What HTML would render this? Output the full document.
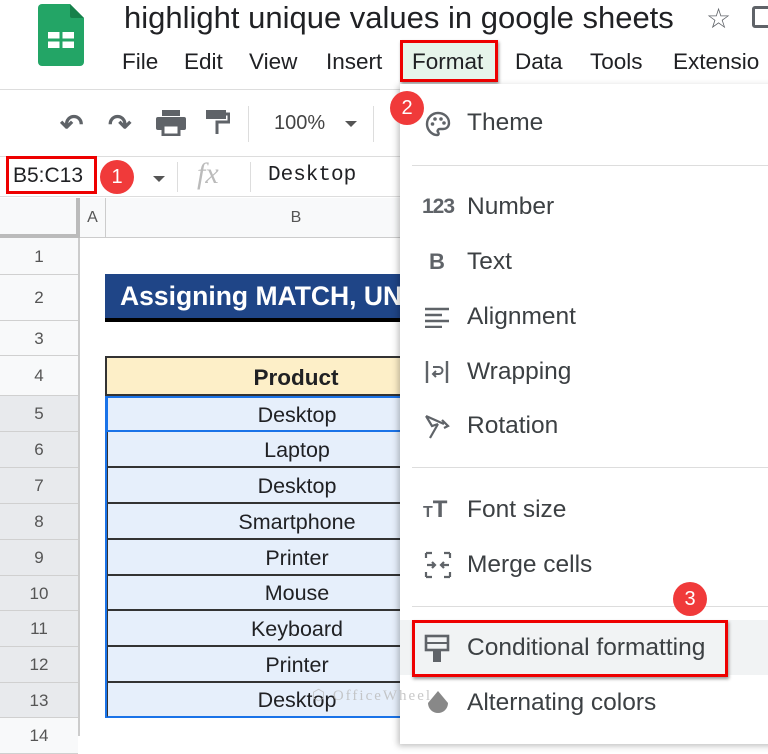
<!DOCTYPE html>
<html><head><style>
*{margin:0;padding:0;box-sizing:border-box}
body{width:768px;height:736px;overflow:hidden;background:#fff;font-family:"Liberation Sans",Arial,sans-serif;position:relative;color:#202124}
.a{position:absolute}
.mi{position:absolute;left:467px;font-size:24.5px;color:#3c4043;line-height:28px}
.rn{position:absolute;left:0;width:78px;text-align:center;font-size:17px;color:#555;border-bottom:1px solid #d0d0d0}
.cell{position:absolute;left:106px;width:380px;text-align:center;font-size:21.5px;background:#e6effb;border-bottom:2px solid #333;border-left:2px solid #333}
.badge{position:absolute;width:34px;height:34px;border-radius:50%;background:#f03a3a;color:#fff;font-size:20px;text-align:center;line-height:34px}
.ic{position:absolute;left:424px}
</style></head><body>
<svg class="a" style="left:38px;top:4px" width="48" height="62" viewBox="0 0 48 62"><path d="M4 0h28l14 14v44a4 4 0 0 1-4 4H4a4 4 0 0 1-4-4V4a4 4 0 0 1 4-4z" fill="#23a566"/><path d="M32 0l14 14H34a2 2 0 0 1-2-2z" fill="#16804a"/><rect x="10" y="28" width="26" height="16" fill="#fff"/><path d="M10 36h26M23 28v16" stroke="#23a566" stroke-width="3"/></svg>
<div class="a" style="left:124px;top:0px;font-size:31px;color:#202124">highlight unique values in google sheets</div>
<div class="a" style="left:706px;top:2px;font-size:28px;color:#5f6368">☆</div>
<div class="a" style="left:752px;top:6px;width:20px;height:22px;border:3px solid #5f6368;border-radius:3px"></div>
<div class="a" style="left:122px;top:49px;font-size:22.5px">File</div>
<div class="a" style="left:184px;top:49px;font-size:22.5px">Edit</div>
<div class="a" style="left:249px;top:49px;font-size:22.5px">View</div>
<div class="a" style="left:326px;top:49px;font-size:22.5px">Insert</div>
<div class="a" style="left:400px;top:40px;width:98px;height:42px;background:#e6f4ea;border:3px solid #e00;box-shadow:1px 2px 3px #999"></div>
<div class="a" style="left:412px;top:49px;font-size:22.5px">Format</div>
<div class="a" style="left:515px;top:49px;font-size:22.5px">Data</div>
<div class="a" style="left:590px;top:49px;font-size:22.5px">Tools</div>
<div class="a" style="left:673px;top:49px;font-size:22.5px">Extensio</div>
<div class="a" style="left:0;top:89px;width:768px;height:1px;background:#ddd"></div>
<div class="a" style="left:60px;top:108px;font-size:28px;color:#5f6368;font-weight:bold">↶</div>
<div class="a" style="left:108px;top:108px;font-size:28px;color:#5f6368;font-weight:bold">↷</div>
<svg class="a" style="left:156px;top:110px" width="30" height="26"><rect x="6" y="0" width="18" height="6" fill="#5f6368"/><rect x="0" y="7" width="30" height="13" rx="2" fill="#5f6368"/><rect x="7" y="15" width="16" height="10" fill="#fff" stroke="#5f6368" stroke-width="3"/></svg>
<svg class="a" style="left:206px;top:110px" width="24" height="26"><rect x="0" y="0" width="20" height="9" fill="#5f6368"/><path d="M20 4h3v8H11v12" stroke="#5f6368" stroke-width="3" fill="none"/></svg>
<div class="a" style="left:248px;top:106px;width:1px;height:36px;background:#ddd"></div>
<div class="a" style="left:274px;top:112px;font-size:20px;color:#444">100%</div>
<div class="a" style="left:345px;top:121px;border:6px solid transparent;border-top:6px solid #555"></div>
<div class="a" style="left:373px;top:106px;width:1px;height:36px;background:#ddd"></div>
<div class="a" style="left:0;top:156px;width:768px;height:1px;background:#ddd"></div>
<div class="a" style="left:0;top:196px;width:768px;height:1px;background:#ddd"></div>
<div class="a" style="left:6px;top:156px;width:91px;height:38px;border:3px solid #e00;background:#fff"></div>
<div class="a" style="left:13px;top:164px;font-size:21px;color:#202124">B5:C13</div>
<div class="badge" style="left:100px;top:160px">1</div>
<div class="a" style="left:153px;top:176px;border:6px solid transparent;border-top:6px solid #555"></div>
<div class="a" style="left:177px;top:162px;width:1px;height:30px;background:#ddd"></div>
<div class="a" style="left:197px;top:157px;font-size:30px;color:#bbb;font-style:italic;font-family:'Liberation Serif',serif">fx</div>
<div class="a" style="left:250px;top:162px;width:1px;height:30px;background:#ddd"></div>
<div class="a" style="left:268px;top:164px;font-size:21px;font-family:'Liberation Mono',monospace;color:#202124">Desktop</div>
<div class="a" style="left:0;top:198px;width:80px;height:40px;background:#f8f9fa;border-right:4px solid #bbb;border-bottom:4px solid #bbb"></div>
<div class="a" style="left:80px;top:198px;width:26px;height:40px;background:#f8f9fa;border-right:1px solid #ccc;border-bottom:1px solid #ccc;font-size:16px;color:#555;text-align:center;line-height:40px">A</div>
<div class="a" style="left:106px;top:198px;width:380px;height:40px;background:#f8f9fa;border-bottom:1px solid #ccc;font-size:16px;color:#555;text-align:center;line-height:40px">B</div>
<div class="a" style="left:78px;top:238px;width:2px;height:498px;background:#ccc"></div>
<div class="rn" style="top:238px;height:37px;line-height:37px;background:#f8f9fa">1</div>
<div class="rn" style="top:275px;height:46px;line-height:46px;background:#f8f9fa">2</div>
<div class="rn" style="top:321px;height:35px;line-height:35px;background:#f8f9fa">3</div>
<div class="rn" style="top:356px;height:40px;line-height:40px;background:#f8f9fa">4</div>
<div class="rn" style="top:396px;height:36px;line-height:36px;background:#e8eaed">5</div>
<div class="rn" style="top:432px;height:36px;line-height:36px;background:#e8eaed">6</div>
<div class="rn" style="top:468px;height:36px;line-height:36px;background:#e8eaed">7</div>
<div class="rn" style="top:504px;height:36px;line-height:36px;background:#e8eaed">8</div>
<div class="rn" style="top:540px;height:36px;line-height:36px;background:#e8eaed">9</div>
<div class="rn" style="top:576px;height:35px;line-height:35px;background:#e8eaed">10</div>
<div class="rn" style="top:611px;height:36px;line-height:36px;background:#e8eaed">11</div>
<div class="rn" style="top:647px;height:36px;line-height:36px;background:#e8eaed">12</div>
<div class="rn" style="top:683px;height:35px;line-height:35px;background:#e8eaed">13</div>
<div class="rn" style="top:718px;height:36px;line-height:36px;background:#f8f9fa">14</div>
<div class="a" style="left:105px;top:274px;width:380px;height:48px;background:#1f4587;border-bottom:4px solid #000;color:#fff;font-weight:bold;font-size:26.5px;line-height:44px;padding-left:15px;white-space:nowrap;overflow:hidden">Assigning MATCH, UNIQUE</div>
<div class="a" style="left:105px;top:356px;width:380px;height:40px;background:#fdefc8;border:2px solid #333;border-right:none;font-weight:bold;font-size:22.5px;text-align:center;line-height:40px">Product</div>
<div class="cell" style="top:396px;height:36px;line-height:34px;border:2px solid #1a73e8;border-right:none;background:#e6effb">Desktop</div>
<div class="cell" style="top:432px;height:36px;line-height:36px">Laptop</div>
<div class="cell" style="top:468px;height:36px;line-height:36px">Desktop</div>
<div class="cell" style="top:504px;height:36px;line-height:36px">Smartphone</div>
<div class="cell" style="top:540px;height:36px;line-height:36px">Printer</div>
<div class="cell" style="top:576px;height:35px;line-height:35px">Mouse</div>
<div class="cell" style="top:611px;height:36px;line-height:36px">Keyboard</div>
<div class="cell" style="top:647px;height:36px;line-height:36px">Printer</div>
<div class="cell" style="top:683px;height:35px;line-height:35px;border-bottom:2px solid #1a73e8">Desktop</div>
<div class="a" style="left:105px;top:396px;width:2px;height:322px;background:#1a73e8"></div>
<div class="a" style="left:400px;top:84px;width:380px;height:660px;background:#fff;box-shadow:-2px 2px 6px rgba(0,0,0,.25)"></div>
<div class="a" style="left:412px;top:165px;width:356px;height:1px;background:#ddd"></div>
<div class="a" style="left:412px;top:467px;width:356px;height:1px;background:#ddd"></div>
<div class="a" style="left:412px;top:606px;width:356px;height:1px;background:#ddd"></div>
<div class="a" style="left:400px;top:620px;width:368px;height:55px;background:#f1f3f4"></div>
<div class="a" style="left:412px;top:620px;width:316px;height:57px;border:3px solid #e00;box-shadow:1px 2px 3px #999"></div>
<svg class="ic" style="top:110px" width="28" height="28" viewBox="0 0 28 28"><path d="M14 3C8 3 3 8 3 14s5 11 10 11c2 0 2-2 1-3s0-3 2-3h3c4 0 6-3 6-6 0-6-5-10-11-10z" fill="none" stroke="#5f6368" stroke-width="2.4"/><circle cx="8.5" cy="14" r="1.8" fill="#5f6368"/><circle cx="11" cy="9" r="1.8" fill="#5f6368"/><circle cx="17" cy="9" r="1.8" fill="#5f6368"/><circle cx="20" cy="13" r="1.8" fill="#5f6368"/></svg>
<div class="mi" style="top:109px">Theme</div>
<div class="a" style="left:422px;top:195px;font-size:21px;font-weight:bold;color:#5f6368;letter-spacing:-1px">123</div>
<div class="mi" style="top:193px">Number</div>
<div class="a" style="left:429px;top:249px;font-size:22px;font-weight:bold;color:#5f6368">B</div>
<div class="mi" style="top:248px">Text</div>
<svg class="ic" style="top:306px" width="26" height="22"><path d="M1 3h24M1 9h17M1 15h24M1 21h17" stroke="#5f6368" stroke-width="2.4"/></svg>
<div class="mi" style="top:303px">Alignment</div>
<svg class="ic" style="top:359px" width="26" height="26"><path d="M3 2v22M23 2v22" stroke="#5f6368" stroke-width="2.4"/><path d="M9 8h6a3 3 0 0 1 0 7H9m3-3-3 3 3 3" stroke="#5f6368" stroke-width="2" fill="none"/></svg>
<div class="mi" style="top:358px">Wrapping</div>
<svg class="ic" style="top:412px" width="28" height="28"><path d="M2 4l18 8M2 4l6 10 6-2M14 12l-8 14M18 8l6 6-4 2" stroke="#5f6368" stroke-width="2.2" fill="none"/></svg>
<div class="mi" style="top:412px">Rotation</div>
<div class="a" style="left:423px;top:496px;font-size:24px;font-weight:bold;color:#5f6368"><span style="font-size:16px">T</span>T</div>
<div class="mi" style="top:496px">Font size</div>
<svg class="ic" style="top:551px" width="28" height="28"><path d="M2 2h6M2 26h6M20 2h6M20 26h6M2 2v5M2 21v5M26 2v5M26 21v5M3 14h8m-3-3 3 3-3 3M25 14h-8m3-3-3 3 3 3" stroke="#5f6368" stroke-width="2.2" fill="none"/></svg>
<div class="mi" style="top:551px">Merge cells</div>
<div class="badge" style="left:673px;top:582px">3</div>
<svg class="ic" style="top:634px" width="26" height="30"><rect x="2" y="2" width="22" height="14" fill="none" stroke="#5f6368" stroke-width="2.6"/><path d="M2 9h22" stroke="#5f6368" stroke-width="2"/><rect x="9" y="16" width="8" height="12" fill="#5f6368"/></svg>
<div class="mi" style="top:634px">Conditional formatting</div>
<svg class="ic" style="top:689px" width="28" height="30"><path d="M14 2 4 14a10 10 0 0 0 20 0z" fill="#888"/></svg>
<div class="mi" style="top:689px">Alternating colors</div>
<div class="a" style="left:312px;top:686px;font-size:15px;color:#bbb;letter-spacing:2px;font-family:'Liberation Serif',serif;opacity:.8">⬡ OfficeWheel</div>
<div class="badge" style="left:390px;top:91px">2</div>
</body></html>
